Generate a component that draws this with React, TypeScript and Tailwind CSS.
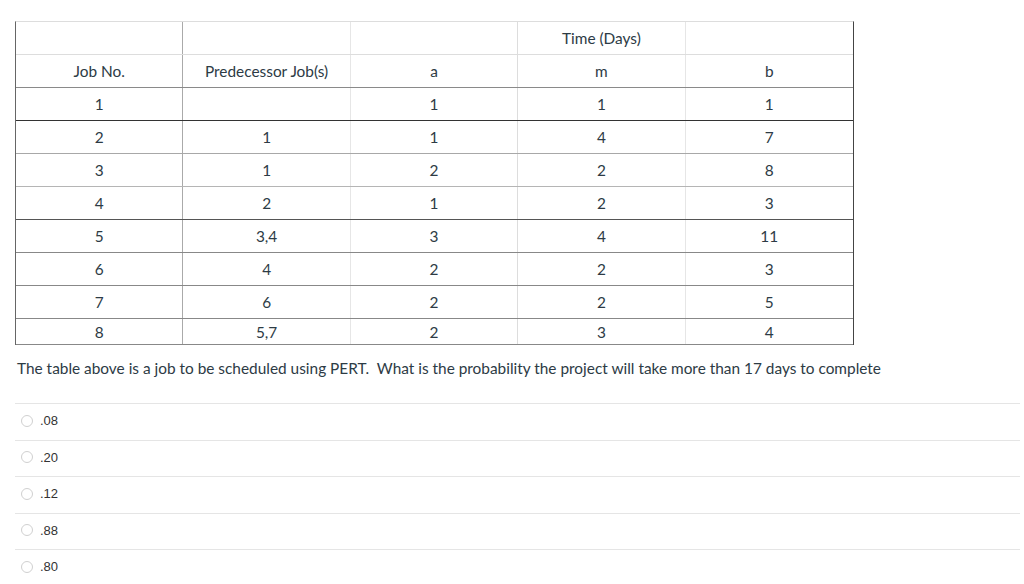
import React from "react";

const rows: { cells: string[]; border: string }[] = [
  { cells: ["", "", "", "Time (Days)", ""], border: "border-b-[#dddddd]" },
  { cells: ["Job No.", "Predecessor Job(s)", "a", "m", "b"], border: "border-b-[#8a8a8a]" },
  { cells: ["1", "", "1", "1", "1"], border: "border-b-[#333333]" },
  { cells: ["2", "1", "1", "4", "7"], border: "border-b-[#a8a8a8]" },
  { cells: ["3", "1", "2", "2", "8"], border: "border-b-[#b5b5b5]" },
  { cells: ["4", "2", "1", "2", "3"], border: "border-b-[#555555]" },
  { cells: ["5", "3,4", "3", "4", "11"], border: "border-b-[#888888]" },
  { cells: ["6", "4", "2", "2", "3"], border: "border-b-[#888888]" },
  { cells: ["7", "6", "2", "2", "5"], border: "border-b-[#888888]" },
  { cells: ["8", "5,7", "2", "3", "4"], border: "border-b-[#888888]" },
];

const colBorders = [
  "border-r border-r-[#aaaaaa]",
  "border-r border-r-[#e6e6e6]",
  "border-r border-r-[#dddddd]",
  "border-r border-r-[#e6e6e6]",
  "",
];

const options = [".08", ".20", ".12", ".88", ".80"];

export default function App() {
  return (
    <div
      className="w-[1024px] h-[584px] bg-white text-[#2d3b45] overflow-hidden"
      style={{ fontFamily: "Lato, 'Open Sans', sans-serif" }}
    >
      <div className="pl-[15px] pt-[21px]">
        <div className="w-[839px] border-l border-l-[#666666] border-r border-r-[#444444] border-t border-t-[#dddddd]">
          {rows.map((r, i) => (
            <div
              key={i}
              className={`grid grid-cols-5 border-b ${r.border} ${i === rows.length - 1 ? "h-[26px]" : "h-[33px]"}`}
            >
              {r.cells.map((c, j) => (
                <div
                  key={j}
                  className={`flex items-center justify-center pt-[2px] text-[15.4px] leading-none ${colBorders[j]}`}
                >
                  {c}
                </div>
              ))}
            </div>
          ))}
        </div>
      </div>
      <p className="pl-[17px] mt-[13px] text-[15.4px] leading-[20px] text-[#2d3b45]">
        The table above is a job to be scheduled using PERT.&nbsp; What is the probability the project will take more than 17 days to complete
      </p>
      <div className="ml-[15px] mr-[4px] mt-[25px]" style={{ fontFamily: "'Liberation Sans', Arial, sans-serif" }}>
        {options.map((o) => (
          <div key={o} className="h-[36.5px] border-t border-t-[#e5e5e5] flex items-center gap-[7px] pl-[6px] pb-[2px]">
            <span className="w-[12px] h-[12px] rounded-full border border-[#d0d0d0] bg-white inline-block" />
            <span className="text-[13px] text-[#333333]">{o}</span>
          </div>
        ))}
      </div>
    </div>
  );
}
